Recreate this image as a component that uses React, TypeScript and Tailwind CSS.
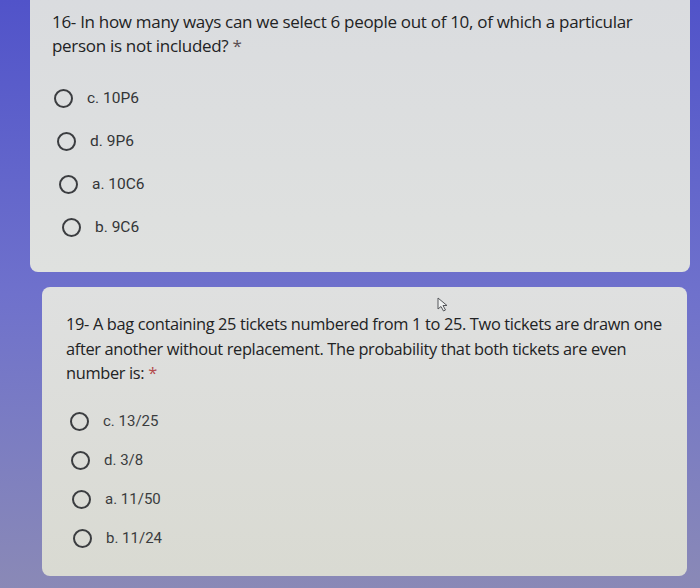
import React from 'react';

interface Question {
  id: string;
  title: string;
  options: { label: string; indent: string }[];
}

const q16: Question = {
  id: 'q16',
  title: '16- In how many ways can we select 6 people out of 10, of which a particular person is not included?',
  options: [
    { label: 'c. 10P6', indent: 'pl-[2px]' },
    { label: 'd. 9P6', indent: 'pl-[5px]' },
    { label: 'a. 10C6', indent: 'pl-[7px]' },
    { label: 'b. 9C6', indent: 'pl-[10px]' }
  ]
};

const q19: Question = {
  id: 'q19',
  title: '19- A bag containing 25 tickets numbered from 1 to 25. Two tickets are drawn one after another without replacement. The probability that both tickets are even number is:',
  options: [
    { label: 'c. 13/25', indent: 'pl-[4px]' },
    { label: 'd. 3/8', indent: 'pl-[5px]' },
    { label: 'a. 11/50', indent: 'pl-[6px]' },
    { label: 'b. 11/24', indent: 'pl-[7px]' }
  ]
};

const Radio: React.FC = () => (
  <span className="w-[19px] h-[19px] rounded-full border-2 border-[#3b3d40] shrink-0" />
);

const App: React.FC = () => {
  return (
    <div className="w-[700px] h-[588px] overflow-hidden relative bg-gradient-to-b from-[#5153c9] via-[#6f71cc] to-[#8a89b6] font-['Roboto',sans-serif]">
      {/* first card, its top is cut off */}
      <div className="ml-[30px] mr-[10px] h-[272px] rounded-b-lg bg-gradient-to-b from-[#dadcdf] to-[#dfe1df] pt-[10px] pl-[22px] pr-[30px] pb-[23px]">
        <p className="font-['Open_Sans',sans-serif] text-[17px] leading-[24px] text-[#222324] tracking-[-0.3px]">
          {q16.title} <span className="text-[#5a4f52]">*</span>
        </p>
        <div className="mt-[19px] flex flex-col">
          {q16.options.map(opt => (
            <div key={opt.label} className={`h-[43px] flex items-center gap-[14px] ${opt.indent}`}>
              <Radio />
              <span className="text-[15.5px] text-[#333537]">{opt.label}</span>
            </div>
          ))}
        </div>
      </div>

      {/* second card */}
      <div className="ml-[42px] mr-[13px] mt-[15px] h-[289px] rounded-lg bg-gradient-to-b from-[#dfe0e0] to-[#d9dad2] pt-[25px] pl-[24px] pr-[12px] pb-[20px]">
        <p className="font-['Open_Sans',sans-serif] text-[16.4px] leading-[24.5px] text-[#222324] tracking-[-0.35px]">
          {q19.title} <span className="text-[#b44b4b]">*</span>
        </p>
        <div className="mt-[16px] flex flex-col">
          {q19.options.map(opt => (
            <div key={opt.label} className={`h-[39px] flex items-center gap-[14px] ${opt.indent}`}>
              <Radio />
              <span className="text-[15px] text-[#3a3c3e]">{opt.label}</span>
            </div>
          ))}
        </div>
      </div>

      {/* mouse pointer */}
      <svg className="absolute left-[437px] top-[297px]" width="12" height="15" viewBox="0 0 12 15">
        <path d="M1 1 L1 12 L4 9.5 L6.5 14 L8.5 13 L6 8.5 L10 8.5 Z" fill="#eef0f0" stroke="#55575a" strokeWidth="1" strokeLinejoin="round" />
      </svg>
    </div>
  );
};

export default App;
